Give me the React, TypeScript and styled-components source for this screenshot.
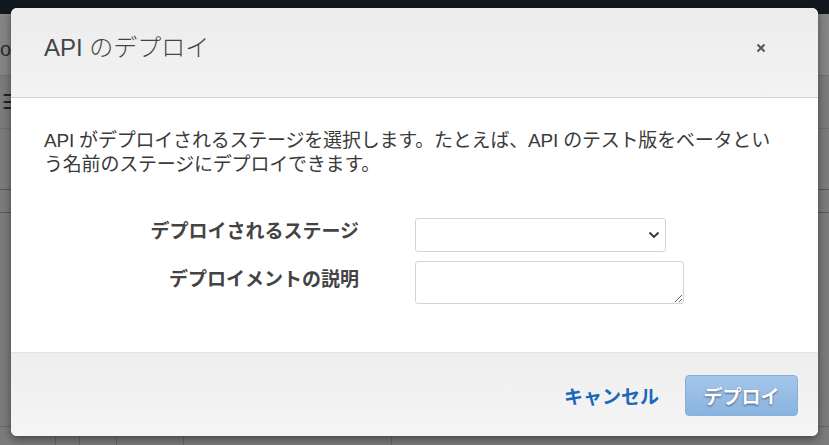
import * as React from "react";
import styled, { createGlobalStyle } from "styled-components";

const GlobalStyle = createGlobalStyle`
  html, body {
    margin: 0;
    padding: 0;
    overflow: hidden;
  }
  body {
    font-family: "Liberation Sans", "Noto Sans CJK JP", sans-serif;
  }
`;

const Page = styled.div`
  position: relative;
  width: 100vw;
  height: 100vh;
  background: #7b7b7b;
  display: flex;
  flex-direction: column;
`;
const TopBar = styled.div`
  height: 14px;
  background: #111820;
  flex-shrink: 0;
`;
const SubBar = styled.div`
  height: 62px;
  background: #858585;
  border-bottom: 1px solid #6e6e6e;
  display: flex;
  align-items: center;
  padding-top: 10px;
  box-sizing: border-box;
  color: #2b2b2b;
  font-size: 20px;
`;
const ToolRow = styled.div`
  height: 52px;
  border-bottom: 1px solid #6e6e6e;
  display: flex;
  align-items: center;
  padding-left: 2px;
  color: #222;
  font-size: 20px;
`;
const Rule = styled.div<{ $gap: number }>`
  margin-top: ${p => p.$gap}px;
  height: 1px;
  background: #4a5a6c;
`;
const Spacer = styled.div`
  flex: 1;
`;
const BottomGrid = styled.div`
  height: 18px;
  display: flex;
  border-top: 1px solid #666;
`;
const GridCell = styled.div<{ $w: number }>`
  width: ${p => p.$w}px;
  border-right: 1px solid #666;
`;

const Modal = styled.div`
  position: absolute;
  left: 11px;
  top: 8px;
  width: 807px;
  height: 428px;
  border-radius: 6px;
  overflow: hidden;
  background: #fff;
  box-shadow: 0 3px 8px rgba(0, 0, 0, 0.45);
  display: flex;
  flex-direction: column;
`;
const Header = styled.div`
  height: 90px;
  flex-shrink: 0;
  box-sizing: border-box;
  padding: 22px 33px 0 33px;
  background: linear-gradient(#ececec, #f3f3f3);
  border-bottom: 1px solid #cfcfcf;
  display: flex;
  align-items: flex-start;
  justify-content: space-between;
`;
const Title = styled.h2`
  margin: 0;
  font-size: 24px;
  line-height: 36px;
  font-weight: 300;
  color: #444;
`;
const Close = styled.button`
  border: none;
  background: none;
  padding: 0;
  margin: 8px 16px 0 0;
  width: 16px;
  height: 20px;
  display: flex;
  align-items: center;
  justify-content: center;
  color: #555;
  cursor: pointer;
`;
const Body = styled.div`
  flex: 1;
  padding: 31px 33px 0 33px;
  display: flex;
  flex-direction: column;
`;
const Intro = styled.p`
  margin: 0;
  font-size: 19px;
  line-height: 24px;
  color: #3a3a3a;
  letter-spacing: -0.2px;
`;
const Form = styled.div`
  margin-top: 41px;
  display: grid;
  grid-template-columns: 315px auto;
  column-gap: 56px;
  row-gap: 9px;
  align-items: center;
`;
const Label = styled.label`
  text-align: right;
  font-size: 19px;
  line-height: 24px;
  font-weight: 700;
  color: #444;
  padding-bottom: 6px;
`;
const SelectWrap = styled.div`
  position: relative;
  width: 251px;
  height: 34px;
`;
const Select = styled.select`
  appearance: none;
  width: 100%;
  height: 100%;
  box-sizing: border-box;
  border: 1px solid #d4d4d4;
  border-radius: 3px;
  background: #fff;
  font-size: 16px;
  outline: none;
`;
const Chevron = styled.svg`
  position: absolute;
  right: 6px;
  top: 13px;
  pointer-events: none;
`;
const TextArea = styled.textarea`
  width: 269px;
  height: 43px;
  box-sizing: border-box;
  border: 1px solid #d4d4d4;
  border-radius: 3px;
  font-size: 16px;
  outline: none;
  display: block;
`;
const Footer = styled.div`
  height: 84px;
  flex-shrink: 0;
  background: linear-gradient(#eeeeee, #f5f5f5);
  border-top: 1px solid #e3e3e3;
  box-sizing: border-box;
  display: flex;
  align-items: center;
  justify-content: flex-end;
  gap: 26px;
  padding: 2px 20px 0 0;
`;
const LinkButton = styled.button`
  border: none;
  background: none;
  padding: 0;
  font-family: inherit;
  font-size: 19px;
  font-weight: 700;
  color: #1b68b8;
  cursor: pointer;
`;
const PrimaryButton = styled.button`
  width: 113px;
  height: 41px;
  border: 1px solid #86afdc;
  border-radius: 4px;
  background: linear-gradient(#a5c6ea, #89b3e0);
  color: #fff;
  font-family: inherit;
  font-size: 19px;
  font-weight: 700;
  text-shadow: 0 1px 2px rgba(40, 60, 90, 0.8);
  cursor: default;
`;

export default function App() {
  return (
    <>
      <GlobalStyle />
      <Page>
        <TopBar />
        <SubBar>ol|</SubBar>
        <ToolRow>☰</ToolRow>
        <Rule $gap={60} />
        <Rule $gap={22} />
        <Spacer />
        <BottomGrid>
          <GridCell $w={55} />
          <GridCell $w={23} />
          <GridCell $w={36} />
          <GridCell $w={66} />
          <GridCell $w={207} />
        </BottomGrid>
        <Modal role="dialog">
          <Header>
            <Title>API のデプロイ</Title>
            <Close aria-label="閉じる">
              <svg width="10" height="10" viewBox="0 0 10 10">
                <path d="M1.5 1.5 L8.5 8.5 M8.5 1.5 L1.5 8.5" stroke="#555" strokeWidth="2" />
              </svg>
            </Close>
          </Header>
          <Body>
            <Intro>
              API がデプロイされるステージを選択します。たとえば、API のテスト版をベータという名前のステージにデプロイできます。
            </Intro>
            <Form>
              <Label>デプロイされるステージ</Label>
              <SelectWrap>
                <Select defaultValue="">
                  <option value=""></option>
                </Select>
                <Chevron width="12" height="8" viewBox="0 0 12 8">
                  <path d="M1.5 1.5 L6 6 L10.5 1.5" fill="none" stroke="#333" strokeWidth="1.8" />
                </Chevron>
              </SelectWrap>
              <Label>デプロイメントの説明</Label>
              <TextArea />
            </Form>
          </Body>
          <Footer>
            <LinkButton>キャンセル</LinkButton>
            <PrimaryButton disabled>デプロイ</PrimaryButton>
          </Footer>
        </Modal>
      </Page>
    </>
  );
}
